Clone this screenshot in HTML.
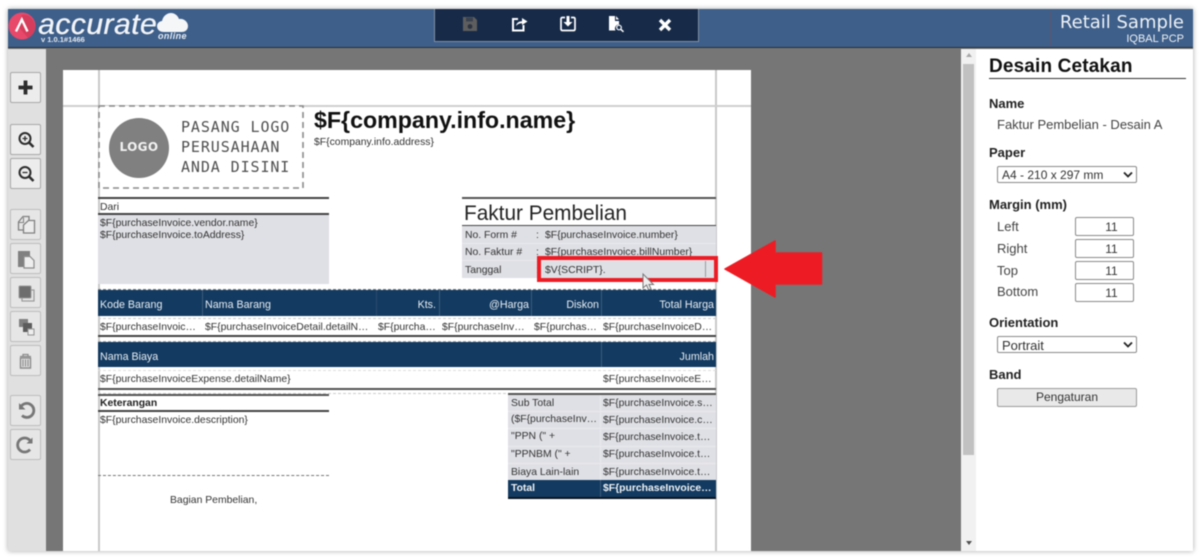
<!DOCTYPE html>
<html><head><meta charset="utf-8">
<style>
html,body{margin:0;padding:0;background:#fff;width:1200px;height:558px;overflow:hidden}
body{font-family:"Liberation Sans",sans-serif;color:#333;position:relative}
#root{position:absolute;left:0;top:0;width:1200px;height:558px;filter:blur(.4px)}
.a{position:absolute}
.t{position:absolute;white-space:nowrap;font-size:10.4px;line-height:12px;color:#333}
.w{color:#e8eef4}
.btn{position:absolute;left:10px;width:29px;height:29px;border:1px solid #bdbdbd;border-radius:2px;background:#e6e6e6;box-sizing:content-box}
.btn svg{position:absolute;left:0;top:0}
.n{position:absolute;background:#133a60}
.lbl{position:absolute;font-size:13px;font-weight:bold;color:#222;white-space:nowrap;line-height:15px}
.rl{position:absolute;font-size:13px;color:#444;white-space:nowrap;line-height:15px}
.inp{position:absolute;left:1075px;width:57px;height:17px;border:1px solid #8a8a8a;border-radius:2px;background:#fff;font-size:12px;color:#333;line-height:18px;text-align:center;text-indent:14px}
.sel{position:absolute;left:997px;width:138px;height:15px;border:1px solid #8a8a8a;border-radius:2px;background:#fff;font-size:12px;color:#333;line-height:17px;text-indent:4px}
.sel svg{position:absolute;right:3px;top:4px}
.clip{position:absolute;overflow:hidden;white-space:normal;font-size:10.4px;line-height:17px;color:#333}
</style></head><body>
<div id="root">
<!-- window -->
<div class="a" style="left:8px;top:9px;width:1185px;height:542px;background:#767676;box-shadow:0 0 5px rgba(0,0,0,.35)"></div>
<!-- header -->
<div class="a" style="left:8px;top:9px;width:1185px;height:39px;background:#3e5f8a;border-bottom:1px solid #2a2f36;box-sizing:border-box"></div>
<svg class="a" style="left:8px;top:11px" width="28" height="30" viewBox="0 0 28 30"><circle cx="14" cy="15" r="13.5" fill="#e8486a"/><path d="M14 4 A11 13 0 0 1 27 15 A13 13 0 0 1 20 27 L9 14Z" fill="#d63c5c"/><path d="M8 20.500 L13.800 8.500 L19.500 20.500" fill="none" stroke="#fff" stroke-width="2.400"/></svg>
<div class="t" style="left:38px;top:10px;font-size:30px;line-height:30px;font-style:italic;color:#f2f4f7;letter-spacing:.5px;text-shadow:.4px 0 0 #f2f4f7">accurate</div>
<svg class="a" style="left:157px;top:12px" width="32" height="21" viewBox="0 0 32 21"><path d="M7 20 C2 20 0 17 0 14 C0 11 3 9 5 9 C6 4 10 1 14 1 C18 1 21 4 22 7 C27 6 31 10 31 14 C31 18 28 20 25 20Z" fill="#f4f6f8"/></svg>
<div class="t" style="left:158px;top:31px;font-size:9px;line-height:11px;font-weight:bold;font-style:italic;color:#e8edf3;letter-spacing:.4px">online</div>
<div class="t" style="left:41px;top:35px;font-size:7.500px;line-height:9px;font-weight:bold;color:#e5e9ef">v 1.0.1#1466</div>
<!-- toolbar -->
<div class="a" style="left:434px;top:9px;width:265px;height:33px;background:#172b49;border:1px solid #7f8fa5;border-top:none;box-sizing:border-box"></div>
<svg class="a" style="left:462px;top:16px" width="16" height="16" viewBox="0 0 16 16"><path d="M1 1H12L15 4V15H1Z" fill="#5e5e5e"/><rect x="4" y="1.500" width="7" height="4" fill="#3a4250"/><circle cx="8" cy="10.500" r="2.400" fill="#2c3440"/></svg>
<svg class="a" style="left:511px;top:16px" width="17" height="16" viewBox="0 0 17 16"><path d="M7 3H2V14.500H12.500V9" fill="none" stroke="#fff" stroke-width="2"/><path d="M5 10 C5.500 6.500 8 5.200 11 5.200V2L16.500 5.500L11 9V7.200C9 7.200 6.500 8 5 10Z" fill="#fff"/></svg>
<svg class="a" style="left:560px;top:15px" width="16" height="17" viewBox="0 0 16 17"><path d="M5 2.500H2.500Q1 2.500 1 4V14Q1 15.500 2.500 15.500H13.500Q15 15.500 15 14V4Q15 2.500 13.500 2.500H11" fill="none" stroke="#fff" stroke-width="1.700"/><path d="M6.500 1H9.500V7H12.500L8 11.500L3.500 7H6.500Z" fill="#fff"/></svg>
<svg class="a" style="left:608px;top:16px" width="17" height="17" viewBox="0 0 17 17"><path d="M1 0H7V5H11V8.500A4 4 0 0 0 7.500 14.500H1Z" fill="#fff"/><path d="M8 0L11 3.500H8Z" fill="#fff"/><circle cx="11" cy="11.500" r="2.300" fill="none" stroke="#fff" stroke-width="1.200"/><path d="M12.800 13.300L15.500 15.800" stroke="#fff" stroke-width="1.500"/></svg>
<svg class="a" style="left:658px;top:18px" width="14" height="14" viewBox="0 0 14 14"><path d="M2 2L12 12M12 2L2 12" stroke="#fff" stroke-width="3.400"/></svg>
<!-- header right -->
<div class="a" style="left:1050px;top:11px;width:1px;height:35px;background:#5a5570"></div>
<div class="t" style="right:16px;top:12px;line-height:21px;color:#eef2f6;font-family:'DejaVu Sans','Liberation Sans',sans-serif;font-size:18px">Retail Sample</div>
<div class="t" style="right:16px;top:33px;font-size:11px;line-height:13px;color:#eef2f6">IQBAL PCP</div>

<!-- left sidebar -->
<div class="a" style="left:8px;top:49px;width:38px;height:502px;background:#e0e0e0"></div>
<div class="btn" style="top:72px;background:#ececec;border-color:#a8a8a8"><svg width="29" height="29"><path d="M14.500 7.500V21.500M7.500 14.500H21.500" stroke="#2d2d2d" stroke-width="3.800"/></svg></div>
<div class="btn" style="top:124px;background:#ececec;border-color:#a8a8a8"><svg width="29" height="29"><circle cx="14" cy="13.500" r="5.500" fill="none" stroke="#2d2d2d" stroke-width="2"/><path d="M18 17.500L22.500 22" stroke="#2d2d2d" stroke-width="2.600"/><path d="M14 11V16M11.500 13.500H16.500" stroke="#2d2d2d" stroke-width="1.300"/></svg></div>
<div class="btn" style="top:158px;background:#ececec;border-color:#a8a8a8"><svg width="29" height="29"><circle cx="14" cy="13.500" r="5.500" fill="none" stroke="#2d2d2d" stroke-width="2"/><path d="M18 17.500L22.500 22" stroke="#2d2d2d" stroke-width="2.600"/><path d="M11.500 13.500H16.500" stroke="#2d2d2d" stroke-width="1.300"/></svg></div>
<div class="btn" style="top:209px"><svg width="29" height="29"><path d="M13 20H7.500V12L12 6.500H18V10" fill="#e6e6e6" stroke="#808080" stroke-width="1.300"/><path d="M8 12.500H12.500V7.500" fill="none" stroke="#808080" stroke-width="1"/><path d="M17.500 10.500H23.500V23H12.500V15Z" fill="#ececec" stroke="#808080" stroke-width="1.300"/></svg></div>
<div class="btn" style="top:243px"><svg width="29" height="29"><rect x="7" y="7" width="12" height="16" fill="#808080"/><path d="M13 12.500H19L23 16.500V24H13Z" fill="#eee" stroke="#8c8c8c" stroke-width="1.200"/></svg></div>
<div class="btn" style="top:277px"><svg width="29" height="29"><rect x="11" y="12" width="12" height="11" fill="none" stroke="#9a9a9a" stroke-width="1.200"/><rect x="8" y="8" width="12" height="12" rx="1" fill="#6e6e6e" stroke="#999" stroke-width="1"/></svg></div>
<div class="btn" style="top:311px"><svg width="29" height="29"><rect x="8" y="7" width="9" height="8" fill="#808080"/><rect x="12" y="11" width="9" height="9" fill="#5c5c5c"/><rect x="17" y="17" width="6" height="6" fill="#eee" stroke="#999" stroke-width="1.100"/></svg></div>
<div class="btn" style="top:345px"><svg width="29" height="29"><path d="M9 10.500H20M12 10.500V8.500H17V10.500" fill="none" stroke="#8c8c8c" stroke-width="1.300"/><path d="M9.500 12H19.500V22H9.500Z" fill="none" stroke="#8c8c8c" stroke-width="1.400"/><path d="M12 13.500V20.500M14.500 13.500V20.500M17 13.500V20.500" stroke="#8c8c8c" stroke-width="1.200"/></svg></div>
<div class="btn" style="top:395px"><svg width="29" height="29"><path d="M10 10.500A7 7 0 1 1 11 19.500" fill="none" stroke="#777" stroke-width="2.800"/><path d="M8 7V13.500H14.500Z" fill="#777"/></svg></div>
<div class="btn" style="top:429px"><svg width="29" height="29"><path d="M19 10.500A7 7 0 1 0 19 19.500" fill="none" stroke="#777" stroke-width="2.800"/><path d="M21.500 7.500V13.500H15.500Z" fill="#777"/></svg></div>

<!-- paper -->
<div class="a" style="left:63px;top:70px;width:688px;height:481px;background:#fff;overflow:hidden"></div>
<div class="a" style="left:98px;top:70px;width:1.500px;height:481px;background:#c8c8c8"></div>
<div class="a" style="left:715px;top:70px;width:1.500px;height:481px;background:#c8c8c8"></div>
<div class="a" style="left:63px;top:105px;width:688px;height:1.500px;background:#cfcfcf"></div>

<!-- logo box -->
<svg class="a" style="left:98px;top:105px" width="206" height="84"><rect x="1" y="1" width="204" height="82" fill="#fff" stroke="#8a8a8a" stroke-width="1.600" stroke-dasharray="6 4"/></svg>
<div class="a" style="left:109px;top:118px;width:60px;height:60px;border-radius:50%;background:#808080"></div>
<div class="t" style="left:109px;top:139px;width:60px;text-align:center;line-height:16px;font-weight:bold;color:#f2f2f2;font-family:'DejaVu Sans',sans-serif;font-size:12px;letter-spacing:.4px">LOGO</div>
<div class="t" style="left:181px;top:117px;font-family:'DejaVu Sans Mono','Liberation Mono',monospace;font-size:15px;line-height:20px;color:#505050;letter-spacing:.9px">PASANG LOGO<br>PERUSAHAAN<br>ANDA DISINI</div>
<div class="t" style="left:314px;top:107px;font-size:23.200px;line-height:27px;font-weight:bold;color:#111">$F{company.info.name}</div>
<div class="t" style="left:314px;top:137px;">$F{company.info.address}</div>

<!-- Dari -->
<div class="a" style="left:98px;top:197px;width:231px;height:2px;background:#444"></div>
<div class="t" style="left:100px;top:202px">Dari</div>
<div class="a" style="left:98px;top:213px;width:231px;height:2px;background:#444"></div>
<div class="a" style="left:98px;top:215px;width:231px;height:69px;background:#dfe0e5"></div>
<div class="t" style="left:100px;top:218px;line-height:11.500px">$F{purchaseInvoice.vendor.name}<br>$F{purchaseInvoice.toAddress}</div>

<!-- Faktur -->
<div class="a" style="left:462px;top:197px;width:254px;height:2px;background:#555"></div>
<div class="t" style="left:464px;top:202px;font-size:20.800px;line-height:23px;color:#222">Faktur Pembelian</div>
<div class="a" style="left:462px;top:225px;width:254px;height:1px;background:#444"></div>
<div class="a" style="left:462px;top:226px;width:254px;height:52px;background:#dfe0e5"></div>
<div class="a" style="left:462px;top:243px;width:254px;height:1px;background:#e9e9ed"></div>
<div class="a" style="left:462px;top:260px;width:254px;height:1px;background:#e9e9ed"></div>
<div class="t" style="left:465px;top:230px">No. Form #</div><div class="t" style="left:536px;top:230px">:</div><div class="t" style="left:545px;top:230px">$F{purchaseInvoice.number}</div>
<div class="t" style="left:465px;top:247px">No. Faktur #</div><div class="t" style="left:536px;top:247px">:</div><div class="t" style="left:545px;top:247px">$F{purchaseInvoice.billNumber}</div>
<div class="t" style="left:465px;top:265px">Tanggal</div><div class="t" style="left:536px;top:265px">:</div>
<!-- red highlight -->
<div class="a" style="left:537px;top:256px;width:181px;height:26px;border:4px solid #ed1c24;box-sizing:border-box;background:#dfe0e5"></div>
<div class="t" style="left:545px;top:265px">$V{SCRIPT}.</div>
<div class="a" style="left:705px;top:261px;width:1px;height:16px;background:#999"></div>
<svg class="a" style="left:641px;top:273px" width="14" height="20" viewBox="0 0 14 20"><path d="M2 1V15L5.500 12L8 18L10.500 17L8 11.500H12.500Z" fill="#eee" stroke="#777" stroke-width="1"/></svg>
<svg class="a" style="left:722px;top:238px" width="102" height="62" viewBox="0 0 102 62"><path d="M3 31L53 3V15H99.500V46H53V59Z" fill="#ed1c24" stroke="#ed1c24" stroke-width="1.500" stroke-linejoin="round"/></svg>

<!-- Detail table -->
<div class="a" style="left:98px;top:289px;width:618px;border-top:1px dashed #777"></div>
<div class="n" style="left:98px;top:290px;width:618px;height:26px"></div>
<div class="a" style="left:202px;top:290px;width:1px;height:26px;background:#3a5a7c"></div>
<div class="a" style="left:376px;top:290px;width:1px;height:26px;background:#2a4c70"></div>
<div class="a" style="left:439px;top:290px;width:1px;height:26px;background:#3a5a7c"></div>
<div class="a" style="left:531px;top:290px;width:1px;height:26px;background:#3a5a7c"></div>
<div class="a" style="left:601px;top:290px;width:1px;height:26px;background:#3a5a7c"></div>
<div class="t w" style="left:100px;top:299px;font-size:10.700px">Kode Barang</div>
<div class="t w" style="left:205px;top:299px;font-size:10.700px">Nama Barang</div>
<div class="t w" style="right:764px;top:299px;font-size:10.700px">Kts.</div>
<div class="t w" style="right:671px;top:299px;font-size:10.700px">@Harga</div>
<div class="t w" style="right:601px;top:299px;font-size:10.700px">Diskon</div>
<div class="t w" style="right:486px;top:299px;font-size:10.700px">Total Harga</div>
<div class="a" style="left:98px;top:318px;width:618px;border-top:1px dashed #ccc"></div>
<div class="t" style="left:100px;top:322px">$F{purchaseInvoic…</div>
<div class="t" style="left:205px;top:322px">$F{purchaseInvoiceDetail.detailN…</div>
<div class="t" style="left:378px;top:322px">$F{purcha…</div>
<div class="t" style="left:442px;top:322px">$F{purchaseInv…</div>
<div class="t" style="left:534px;top:322px">$F{purchas…</div>
<div class="t" style="left:603px;top:322px">$F{purchaseInvoiceD…</div>
<div class="a" style="left:98px;top:335px;width:618px;height:2px;background:#444"></div>
<!-- Expense table -->
<div class="a" style="left:98px;top:341px;width:618px;border-top:1px dashed #aaa"></div>
<div class="n" style="left:98px;top:342px;width:618px;height:25px"></div>
<div class="a" style="left:601px;top:342px;width:1px;height:25px;background:#3a5a7c"></div>
<div class="t w" style="left:100px;top:351px;font-size:10.700px">Nama Biaya</div>
<div class="t w" style="right:486px;top:351px;font-size:10.700px">Jumlah</div>
<div class="a" style="left:98px;top:370px;width:618px;border-top:1px dashed #ddd"></div>
<div class="t" style="left:100px;top:374px">$F{purchaseInvoiceExpense.detailName}</div>
<div class="t" style="left:603px;top:374px">$F{purchaseInvoiceE…</div>
<div class="a" style="left:98px;top:388px;width:618px;height:2px;background:#555"></div>
<div class="a" style="left:98px;top:393px;width:618px;border-top:1px dashed #ccc"></div>

<!-- Keterangan -->
<div class="a" style="left:98px;top:394px;width:231px;height:2px;background:#555"></div>
<div class="t" style="left:100px;top:398px;font-weight:bold;color:#222">Keterangan</div>
<div class="a" style="left:98px;top:410px;width:231px;height:2px;background:#444"></div>
<div class="t" style="left:100px;top:415px">$F{purchaseInvoice.description}</div>
<div class="a" style="left:98px;top:475px;width:231px;border-top:1px dashed #777"></div>
<div class="t" style="left:170px;top:495px">Bagian Pembelian,</div>

<!-- Totals -->
<div class="a" style="left:508px;top:393px;width:208px;height:2px;background:#555"></div>
<div class="a" style="left:508px;top:395px;width:208px;height:85px;background:#dfe0e5"></div>
<div class="a" style="left:508px;top:411px;width:208px;height:1px;background:#eaeaee"></div>
<div class="a" style="left:508px;top:428px;width:208px;height:1px;background:#eaeaee"></div>
<div class="a" style="left:508px;top:446px;width:208px;height:1px;background:#eaeaee"></div>
<div class="a" style="left:508px;top:463px;width:208px;height:1px;background:#eaeaee"></div>
<div class="a" style="left:600px;top:395px;width:1px;height:85px;background:#eaeaee"></div>
<div class="t" style="left:511px;top:398px">Sub Total</div><div class="t" style="left:603px;top:398px">$F{purchaseInvoice.s…</div>
<div class="clip" style="left:511px;top:412px;width:86px;height:16px;line-height:15px">($F{purchaseInv…<br>"Diskon" ("Disk</div><div class="t" style="left:603px;top:415px">$F{purchaseInvoice.c…</div>
<div class="clip" style="left:511px;top:429px;width:86px;height:17px;line-height:16px">"PPN (" +<br>$F{purchaseInv</div><div class="t" style="left:603px;top:432px">$F{purchaseInvoice.t…</div>
<div class="clip" style="left:511px;top:447px;width:86px;height:16px;line-height:15px">"PPNBM (" +<br>$F{purchaseInv</div><div class="t" style="left:603px;top:449px">$F{purchaseInvoice.t…</div>
<div class="t" style="left:511px;top:467px">Biaya Lain-lain</div><div class="t" style="left:603px;top:467px">$F{purchaseInvoice.t…</div>
<div class="n" style="left:508px;top:480px;width:208px;height:17px"></div>
<div class="a" style="left:508px;top:497px;width:208px;height:2px;background:#0a1420"></div>
<div class="a" style="left:600px;top:480px;width:1px;height:17px;background:#3a5a7c"></div>
<div class="t" style="left:511px;top:483px;font-weight:bold;color:#f0f3f6">Total</div>
<div class="t" style="left:603px;top:483px;font-weight:bold;color:#f0f3f6">$F{purchaseInvoice…</div>

<!-- scrollbar -->
<div class="a" style="left:961px;top:49px;width:15px;height:502px;background:#f1f1f1"></div>
<div class="a" style="left:963px;top:64px;width:11px;height:391px;background:#c1c1c1"></div>
<svg class="a" style="left:965px;top:52px" width="8" height="6"><path d="M4 1L7 5H1Z" fill="#a8a8a8"/></svg>
<svg class="a" style="left:965px;top:540px" width="8" height="6"><path d="M1 1H7L4 5Z" fill="#505050"/></svg>

<!-- right panel -->
<div class="a" style="left:976px;top:49px;width:217px;height:502px;background:#fff"></div>
<div class="t" style="left:989px;top:56px;font-size:19px;line-height:22px;font-weight:bold;color:#111;letter-spacing:.15px">Desain Cetakan</div>
<div class="a" style="left:989px;top:78px;width:197px;height:1px;background:#333"></div>
<div class="lbl" style="left:989px;top:96px">Name</div>
<div class="rl" style="left:997px;top:117px">Faktur Pembelian - Desain A</div>
<div class="lbl" style="left:989px;top:145px">Paper</div>
<div class="sel" style="top:166px">A4 - 210 x 297 mm<svg width="10" height="8"><path d="M1 1.500L5 5.500L9 1.500" fill="none" stroke="#222" stroke-width="1.800"/></svg></div>
<div class="lbl" style="left:989px;top:197px">Margin (mm)</div>
<div class="rl" style="left:997px;top:219px">Left</div><div class="inp" style="top:217px">11</div>
<div class="rl" style="left:997px;top:241px">Right</div><div class="inp" style="top:239px">11</div>
<div class="rl" style="left:997px;top:263px">Top</div><div class="inp" style="top:261px">11</div>
<div class="rl" style="left:997px;top:284px">Bottom</div><div class="inp" style="top:283px">11</div>
<div class="lbl" style="left:989px;top:315px">Orientation</div>
<div class="sel" style="top:336px;font-size:13px">Portrait<svg width="10" height="8"><path d="M1 1.500L5 5.500L9 1.500" fill="none" stroke="#222" stroke-width="1.800"/></svg></div>
<div class="lbl" style="left:989px;top:367px">Band</div>
<div class="a" style="left:997px;top:388px;width:138px;height:17px;border:1px solid #9a9a9a;border-radius:2px;background:#e9e9e9;font-size:12px;line-height:17px;text-align:center;color:#333">Pengaturan</div>
</div>
</body></html>
